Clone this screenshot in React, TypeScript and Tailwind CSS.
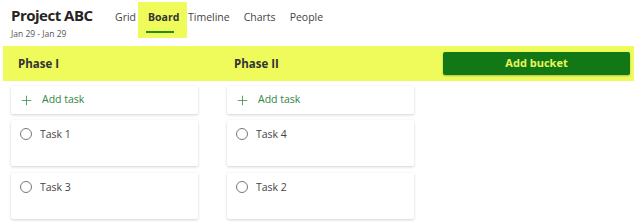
import { Plus } from "lucide-react";

const font = { fontFamily: '"Open Sans", "Noto Sans", sans-serif' };

const columns = [
    { name: "Phase I", tasks: ["Task 1", "Task 3"] },
    { name: "Phase II", tasks: ["Task 4", "Task 2"] },
];

function TaskCard({ title }: { title: string }) {
    return (
        <div className="h-[46px] bg-white rounded-[2px] shadow-[0_1px_3px_rgba(0,0,0,0.18)] flex items-start px-[9px] pt-[8px] gap-[8px]">
            <span className="w-[12px] h-[12px] rounded-full border border-[#777] shrink-0" />
            <span className="text-[10.5px] leading-[12px] text-[#444]">{title}</span>
        </div>
    );
}

export default function App() {
    return (
        <div className="w-[634px] h-[224px] bg-white overflow-hidden" style={font}>
            {/* Header */}
            <div className="flex items-start pl-[11px] h-[46px]">
                <div className="pt-[6px] w-[104px]">
                    <div className="text-[15px] leading-[19px] font-bold text-[#252423] tracking-[-0.5px]">Project ABC</div>
                    <div className="text-[8.5px] leading-[12px] text-[#555] mt-[3px]">Jan 29 - Jan 29</div>
                </div>
                <div className="flex items-start text-[10.5px] text-[#444]">
                    <div className="pt-[10px] mr-[2px]">Grid</div>
                    <div className="relative h-[36px] mt-[2px] w-[49px] pl-[10px] bg-[#eefb5a] pt-[8px] font-bold text-[#333]">
                        Board
                        <span className="absolute left-[8px] w-[28px] top-[29px] h-[2px] bg-[#2a8a1a]" />
                    </div>
                    <div className="flex gap-[14px] pl-[1px] pt-[10px]">
                        <span>Timeline</span>
                        <span>Charts</span>
                        <span>People</span>
                    </div>
                </div>
            </div>

            {/* Bucket headers */}
            <div className="ml-[3px] h-[35px] bg-[#eefb5a] flex items-center pl-[8px] gap-[29px]">
                {columns.map(col => (
                    <div key={col.name} className="w-[187px] pl-[7px] text-[11.5px] font-bold text-[#333]">
                        {col.name}
                    </div>
                ))}
                <div className="w-[187px] h-[23px] bg-[#117815] rounded-[2px] flex items-center justify-center text-[11px] font-bold text-[#e8f55c] shadow-[0_1px_2px_rgba(0,0,0,0.25)]">
                    Add bucket
                </div>
            </div>

            {/* Columns */}
            <div className="flex gap-[29px] pl-[11px] pt-[5px]">
                {columns.map(col => (
                    <div key={col.name} className="w-[187px] flex flex-col">
                        <div className="h-[28px] bg-white rounded-[2px] shadow-[0_1px_3px_rgba(0,0,0,0.18)] flex items-center px-[8px] gap-[8px] text-[10.5px] text-[#2e8540]">
                            <Plus className="w-[15px] h-[15px]" strokeWidth={1.2} />
                            Add task
                        </div>
                        <div className="mt-[6px] flex flex-col gap-[7px]">
                            {col.tasks.map(t => (
                                <TaskCard key={t} title={t} />
                            ))}
                        </div>
                    </div>
                ))}
            </div>
        </div>
    );
}
